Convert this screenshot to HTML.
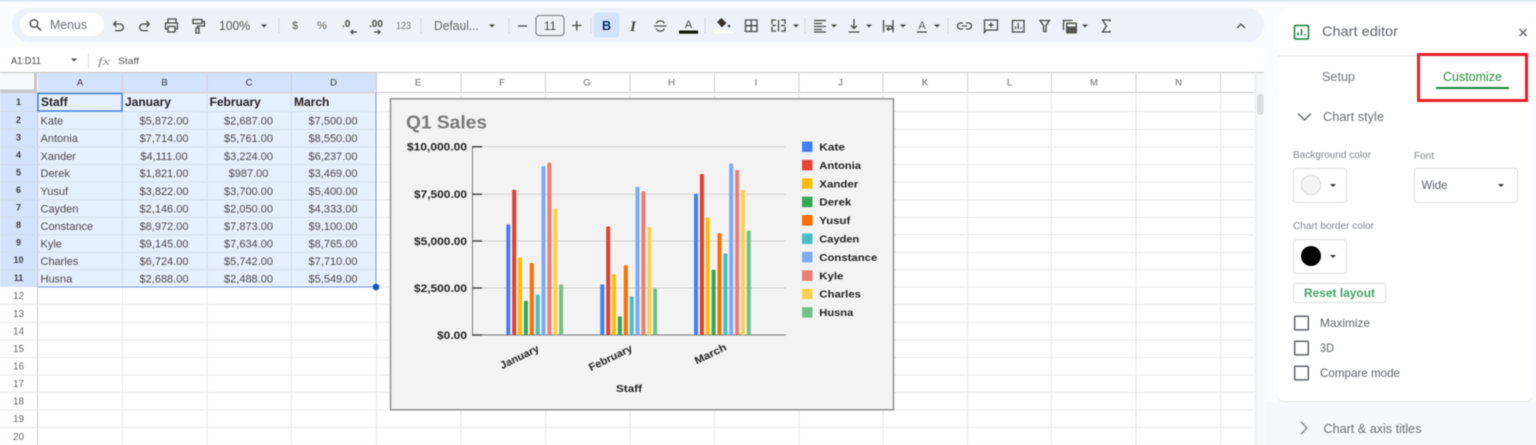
<!DOCTYPE html>
<html lang="en"><head><meta charset="utf-8"><title>Chart editor</title>
<style>
html,body{margin:0;padding:0;width:1536px;height:445px;overflow:hidden;background:#f9fbfd}
svg{display:block;filter:blur(.4px)}
text{font-family:"Liberation Sans",Arial,sans-serif}
.c{font-size:11px;fill:#4a4a4a;text-anchor:middle}
.n{font-size:11px;fill:#4a4a4a}
.h{font-size:12px;font-weight:700;fill:#222}
.rs{font-size:9px;font-weight:700;fill:#3c4043;text-anchor:middle}
.r{font-size:10px;fill:#6a6a6a;text-anchor:middle}
.cs{font-size:9.5px;fill:#333;text-anchor:middle}
.cu{font-size:9.5px;fill:#666;text-anchor:middle}
.y{font-size:11px;font-weight:700;fill:#222;text-anchor:end}
.l{font-size:10.5px;font-weight:700;fill:#222}
.i{fill:none;stroke:#444746;stroke-width:1.3}
.p{font-size:12px;fill:#5f6368}
.s{font-size:10px;fill:#80868b}
.t{fill:#5f6368}
</style></head><body>
<svg width="1536" height="445" viewBox="0 0 1536 445" xmlns="http://www.w3.org/2000/svg">
<rect width="1536" height="445" fill="#f9fbfd"/>
<rect width="1536" height="1.2" fill="#c9d6e6"/>
<!-- toolbar -->
<rect x="12" y="8" width="1252" height="34" rx="17" fill="#edf2fa"/>
<rect x="20" y="13" width="84" height="23" rx="11.5" fill="#fff"/>
<circle cx="34" cy="23.5" r="3.8" fill="none" stroke="#444746" stroke-width="1.4"/><path d="M37 26.5l4 4" stroke="#444746" stroke-width="1.5"/>
<text x="50" y="29" font-size="13" fill="#6a6e73" textLength="37" lengthAdjust="spacingAndGlyphs">Menus</text>
<path class="i" d="M114 24h6a3.2 3.2 0 0 1 0 6.6h-5M116.5 21l-2.8 3 2.8 3"/>
<path class="i" d="M149 24h-6a3.2 3.2 0 0 0 0 6.6h5M146.500 21l2.800 3-2.800 3"/>
<path class="i" d="M168 23v-4h8v4M168 29h-2.500v-6h12v6H175M168 26.500h7V32h-7z" stroke-width="1.4"/>
<path class="i" d="M193 19.500h9v4h-9zM202 21.500h2.500v4.500h-7v2M196 28h3v5h-3z" stroke-width="1.3"/>
<text x="219" y="30" font-size="13" fill="#555" textLength="31" lengthAdjust="spacingAndGlyphs">100%</text>
<path d="M261 24.500h6l-3 3z" fill="#444746"/>
<rect x="278.500" y="17" width="1" height="17" fill="#d3d7dd"/>
<text x="295" y="29" font-size="11" font-weight="700" fill="#777" text-anchor="middle">$</text>
<text x="322" y="29" font-size="11" font-weight="700" fill="#888" text-anchor="middle">%</text>
<text x="342" y="27" font-size="10" font-weight="700" fill="#444">.0</text>
<path class="i" d="M357 32h-6M353 30l-2 2 2 2" stroke-width="1"/>
<text x="369" y="27" font-size="10" font-weight="700" fill="#444">.00</text>
<path class="i" d="M374 32h6M378 30l2 2-2 2" stroke-width="1"/>
<text x="396" y="29" font-size="10" fill="#777" textLength="15" lengthAdjust="spacingAndGlyphs">123</text>
<rect x="420.500" y="17" width="1" height="17" fill="#d3d7dd"/>
<text x="434" y="30" font-size="12.500" fill="#666" textLength="45" lengthAdjust="spacingAndGlyphs">Defaul...</text>
<path d="M489 24.500h6l-3 3z" fill="#444746"/>
<rect x="508.500" y="17" width="1" height="17" fill="#d3d7dd"/>
<path d="M518 26h9" stroke="#444746" stroke-width="1.300"/>
<rect x="536" y="15.500" width="28" height="20" rx="3" fill="none" stroke="#70757a" stroke-width="1"/>
<text x="550" y="30" font-size="12" fill="#444" text-anchor="middle">11</text>
<path d="M572 25.500h9.500M576.700 21v9.500" stroke="#444746" stroke-width="1.300"/>
<rect x="590.500" y="17" width="1" height="17" fill="#d3d7dd"/>
<rect x="594" y="12.500" width="25" height="25" rx="3" fill="#d3e3fd"/>
<text x="606.500" y="30" font-size="12.500" font-weight="700" fill="#0b2a66" text-anchor="middle">B</text>
<text x="633" y="31" font-size="15" font-style="italic" font-weight="700" fill="#444746" text-anchor="middle" style='font-family:"Liberation Serif",serif'>I</text>
<path class="i" d="M654 26h12.500M656.500 23.500c0-3.500 7.500-3.500 7.500 0M656.500 28.500c0 3.500 7.500 3.500 7.500 0" stroke-width="1.100"/>
<text x="688.500" y="28" font-size="11" fill="#444" text-anchor="middle">A</text>
<rect x="679" y="30.500" width="19" height="3.200" fill="#111"/>
<rect x="704.500" y="17" width="1" height="17" fill="#d3d7dd"/>
<path d="M717 22l4.500-4 5 5-4.500 4.500z" fill="#333"/><circle cx="729" cy="26" r="1.300" fill="#333"/>
<rect x="713" y="30" width="20" height="3.300" fill="#fff"/>
<path class="i" d="M745.500 20h11.500v11.500h-11.500zM751.200 20v11.500M745.500 25.700H757"/>
<path class="i" d="M772 24v-4h4M785 24v-4h-4M772 27v4h4M785 27v4h-4M772 25.500h4M785 25.500h-4M778.500 20v11.500" stroke-width="1.200"/>
<path d="M793 24.500h6l-3 3z" fill="#444746"/>
<rect x="804.500" y="17" width="1" height="17" fill="#d3d7dd"/>
<path class="i" d="M814 20.500h12M814 23.500h8M814 26.500h12M814 29.500h8M814 32h12" stroke-width="1"/>
<path d="M831 24.500h6l-3 3z" fill="#444746"/>
<path class="i" d="M854 19v9M851 25.500l3 3 3-3M848.500 32h11"/>
<path d="M866 24.500h6l-3 3z" fill="#444746"/>
<path class="i" d="M883.500 20v12M893 20v12M885 26h6a1.500 1.500 0 0 1-1 3h-2M889 27.500l-2 1.500 2 1.500" stroke-width="1.100"/>
<path d="M900 24.500h6l-3 3z" fill="#444746"/>
<text x="922" y="29" font-size="11" fill="#555" text-anchor="middle">A</text><path class="i" d="M917 32h10" stroke-width="1"/>
<path d="M934 24.500h6l-3 3z" fill="#444746"/>
<rect x="947.500" y="17" width="1" height="17" fill="#d3d7dd"/>
<path class="i" d="M963 23h-2.500a3 3 0 0 0 0 6h2.500M966 23h2.500a3 3 0 0 1 0 6H966M962 26h5"/>
<path class="i" d="M984.500 20h13v10h-11l-2 2.500zM991 22.500v5M988.500 25h5"/>
<path class="i" d="M1012.500 20.500h11.500v11.500h-11.500zM1015.500 29v-2.500M1018.200 29v-6M1021 29v-1.500"/>
<path class="i" d="M1040 20.500h9.500l-3.500 5v6h-2.500v-6z"/>
<path class="i" d="M1063.500 30v-9.500h9"/><rect x="1066" y="22.500" width="11" height="11" rx="1" fill="#555"/><rect x="1067.500" y="24" width="8" height="2.500" fill="#edf2fa"/>
<path d="M1082 24.500h6l-3 3z" fill="#444746"/>
<path class="i" d="M1110 21.500v-1.500h-7.500l4 6-4 6h7.500v-1.500" stroke-width="1.400"/>
<path class="i" d="M1237 28l4-4 4 4" stroke-width="1.300"/>
<!-- formula bar -->
<rect x="0" y="48" width="1264" height="24" fill="#fff"/>
<text x="11" y="64" font-size="10.500" fill="#444" textLength="30" lengthAdjust="spacingAndGlyphs">A1:D11</text>
<path d="M71 58.500h6l-3 3z" fill="#444746"/>
<rect x="88" y="53" width="1" height="15" fill="#dadce0"/>
<text x="98" y="65" font-size="12" font-style="italic" fill="#8a8a8a" style='font-family:"Liberation Serif",serif' textLength="12" lengthAdjust="spacingAndGlyphs">fx</text>
<text x="118" y="64" font-size="9.500" fill="#555" textLength="21" lengthAdjust="spacingAndGlyphs">Staff</text>
<!-- grid -->
<rect x="0" y="72" width="1264" height="373" fill="#fff"/>
<rect x="38" y="73" width="338" height="19" fill="#d3e3fd"/>
<rect x="0" y="92" width="37" height="195" fill="#d3e3fd"/>
<rect x="38" y="92" width="338" height="195" fill="#e6effd"/>
<rect x="0" y="73" width="35" height="17" fill="#f8f9fa"/>
<path d="M35.500 73v18h-35.500" fill="none" stroke="#c7c7c7" stroke-width="3"/>
<path d="M0 72.500H1264" stroke="#c4c7c5" stroke-width="1"/>
<path d="M0 92.500H1255M37.500 92V445" stroke="#c9c9c9" stroke-width="1"/>
<path d="M0 111.500H376M0 129.300H376M0 147H376M0 164.500H376M0 182H376M0 199.700H376M0 217.300H376M0 234.800H376M0 252.300H376M0 269.800H376" stroke="#d2dcec" stroke-width="1"/>
<path d="M122.500 92V287M207 92V287M291.500 92V287" stroke="#d2dcec" stroke-width="1"/>
<path d="M376 111.500H1255M376 129.300H1255M376 147H1255M376 164.500H1255M376 182H1255M376 199.700H1255M376 217.300H1255M376 234.800H1255M376 252.300H1255M376 269.800H1255M376 287H1255M0 304.500H1255M0 322.300H1255M0 340H1255M0 357.500H1255M0 375H1255M0 392.500H1255M0 410H1255M0 427.700H1255" stroke="#e8e8e8" stroke-width="1"/>
<path d="M122.500 287V445M207 287V445M291.500 287V445M376.500 287V445M461 92V445M545.500 92V445M630 92V445M714.500 92V445M799 92V445M883 92V445M967.500 92V445M1051.500 92V445M1136 92V445M1220.500 92V445M1255.500 72V445" stroke="#e8e8e8" stroke-width="1"/>
<path d="M122.500 73V92M207 73V92M291.500 73V92M376.500 73V92M461 73V92M545.500 73V92M630 73V92M714.500 73V92M799 73V92M883 73V92M967.500 73V92M1051.500 73V92M1136 73V92M1220.500 73V92" stroke="#cfcfcf" stroke-width="1"/>
<rect x="1256" y="73" width="8" height="372" fill="#f8f9fa"/>
<rect x="1257" y="94" width="6.500" height="21" rx="3" fill="#dadce0"/>
<text class="cs" x="80" y="85.500">A</text><text class="cs" x="164.500" y="85.500">B</text><text class="cs" x="249" y="85.500">C</text><text class="cs" x="333.500" y="85.500">D</text>
<text class="cu" x="418" y="85.500">E</text><text class="cu" x="502" y="85.500">F</text><text class="cu" x="587" y="85.500">G</text><text class="cu" x="671.500" y="85.500">H</text><text class="cu" x="756" y="85.500">I</text><text class="cu" x="840.500" y="85.500">J</text><text class="cu" x="925" y="85.500">K</text><text class="cu" x="1009.500" y="85.500">L</text><text class="cu" x="1094" y="85.500">M</text><text class="cu" x="1178.500" y="85.500">N</text>
<text class="rs" x="18.500" y="105">1</text><text class="rs" x="18.500" y="123">2</text><text class="rs" x="18.500" y="140.500">3</text><text class="rs" x="18.500" y="158">4</text><text class="rs" x="18.500" y="175.500">5</text><text class="rs" x="18.500" y="193">6</text><text class="rs" x="18.500" y="210.500">7</text><text class="rs" x="18.500" y="228">8</text><text class="rs" x="18.500" y="245.500">9</text><text class="rs" x="18.500" y="263">10</text><text class="rs" x="18.500" y="281">11</text>
<text class="r" x="18.500" y="299">12</text><text class="r" x="18.500" y="317">13</text><text class="r" x="18.500" y="334.500">14</text><text class="r" x="18.500" y="352">15</text><text class="r" x="18.500" y="369.500">16</text><text class="r" x="18.500" y="387">17</text><text class="r" x="18.500" y="404.500">18</text><text class="r" x="18.500" y="422">19</text><text class="r" x="18.500" y="440">20</text>
<text class="h" x="41" y="106">Staff</text><text class="h" x="125" y="106">January</text><text class="h" x="209.500" y="106">February</text><text class="h" x="294" y="106">March</text>
<text class="n" x="40.500" y="124.500">Kate</text><text class="c" x="164" y="124.500">$5,872.00</text><text class="c" x="248.500" y="124.500">$2,687.00</text><text class="c" x="333" y="124.500">$7,500.00</text>
<text class="n" x="40.500" y="142">Antonia</text><text class="c" x="164" y="142">$7,714.00</text><text class="c" x="248.500" y="142">$5,761.00</text><text class="c" x="333" y="142">$8,550.00</text>
<text class="n" x="40.500" y="160">Xander</text><text class="c" x="164" y="160">$4,111.00</text><text class="c" x="248.500" y="160">$3,224.00</text><text class="c" x="333" y="160">$6,237.00</text>
<text class="n" x="40.500" y="177">Derek</text><text class="c" x="164" y="177">$1,821.00</text><text class="c" x="248.500" y="177">$987.00</text><text class="c" x="333" y="177">$3,469.00</text>
<text class="n" x="40.500" y="195">Yusuf</text><text class="c" x="164" y="195">$3,822.00</text><text class="c" x="248.500" y="195">$3,700.00</text><text class="c" x="333" y="195">$5,400.00</text>
<text class="n" x="40.500" y="212.500">Cayden</text><text class="c" x="164" y="212.500">$2,146.00</text><text class="c" x="248.500" y="212.500">$2,050.00</text><text class="c" x="333" y="212.500">$4,333.00</text>
<text class="n" x="40.500" y="230">Constance</text><text class="c" x="164" y="230">$8,972.00</text><text class="c" x="248.500" y="230">$7,873.00</text><text class="c" x="333" y="230">$9,100.00</text>
<text class="n" x="40.500" y="247.500">Kyle</text><text class="c" x="164" y="247.500">$9,145.00</text><text class="c" x="248.500" y="247.500">$7,634.00</text><text class="c" x="333" y="247.500">$8,765.00</text>
<text class="n" x="40.500" y="265">Charles</text><text class="c" x="164" y="265">$6,724.00</text><text class="c" x="248.500" y="265">$5,742.00</text><text class="c" x="333" y="265">$7,710.00</text>
<text class="n" x="40.500" y="282.500">Husna</text><text class="c" x="164" y="282.500">$2,688.00</text><text class="c" x="248.500" y="282.500">$2,488.00</text><text class="c" x="333" y="282.500">$5,549.00</text>
<!-- selection -->
<path d="M38 287H376V92.500" fill="none" stroke="#6f9ae8" stroke-width="1"/>
<rect x="38" y="93.500" width="84" height="17.500" fill="none" stroke="#2f76e0" stroke-width="1.300"/>
<circle cx="376" cy="287" r="3.300" fill="#0b57d0"/>
<!-- chart -->
<rect x="390.500" y="98.800" width="503" height="311" fill="#f3f3f3" stroke="#8f8f8f" stroke-width="1.500"/>
<text x="406" y="128.500" font-size="18" font-weight="700" fill="#7a7a7a" textLength="81" lengthAdjust="spacingAndGlyphs">Q1 Sales</text>
<path d="M472 146.700H786M472 194.300H786M472 241H786M472 288H786" stroke="#cfcfcf" stroke-width="1"/>
<path d="M472.500 146.700V335M472 335H786" stroke="#777" stroke-width="1"/>
<path d="M472 146.700h10M472 194.300h10M472 241h10M472 288h10M472 335h10" stroke="#444" stroke-width="1.500"/>
<text class="y" x="467" y="150.500" textLength="60" lengthAdjust="spacingAndGlyphs">$10,000.00</text>
<text class="y" x="467" y="198" textLength="53" lengthAdjust="spacingAndGlyphs">$7,500.00</text>
<text class="y" x="467" y="245" textLength="53" lengthAdjust="spacingAndGlyphs">$5,000.00</text>
<text class="y" x="467" y="292" textLength="53" lengthAdjust="spacingAndGlyphs">$2,500.00</text>
<text class="y" x="467" y="339" textLength="30" lengthAdjust="spacingAndGlyphs">$0.00</text>
<g>
<g fill="#3f80f5"><rect x="506.300" y="224.400" width="4" height="110.600" rx="1"/><rect x="600.300" y="284.400" width="4" height="50.600" rx="1"/><rect x="694" y="193.800" width="4" height="141.200" rx="1"/></g>
<g fill="#e63c2e"><rect x="512.200" y="189.700" width="4" height="145.300" rx="1"/><rect x="606.200" y="226.500" width="4" height="108.500" rx="1"/><rect x="699.900" y="174" width="4" height="161" rx="1"/></g>
<g fill="#fbbc04"><rect x="518" y="257.600" width="4" height="77.400" rx="1"/><rect x="612" y="274.300" width="4" height="60.700" rx="1"/><rect x="705.700" y="217.600" width="4" height="117.400" rx="1"/></g>
<g fill="#34a853"><rect x="523.900" y="300.700" width="4" height="34.300" rx="1"/><rect x="617.900" y="316.400" width="4" height="18.600" rx="1"/><rect x="711.600" y="269.700" width="4" height="65.300" rx="1"/></g>
<g fill="#ff6d01"><rect x="529.800" y="263" width="4" height="72" rx="1"/><rect x="623.800" y="265.300" width="4" height="69.700" rx="1"/><rect x="717.500" y="233.300" width="4" height="101.700" rx="1"/></g>
<g fill="#46bdc6"><rect x="535.700" y="294.600" width="4" height="40.400" rx="1"/><rect x="629.700" y="296.400" width="4" height="38.600" rx="1"/><rect x="723.400" y="253.400" width="4" height="81.600" rx="1"/></g>
<g fill="#7baaf7"><rect x="541.500" y="166.100" width="4" height="168.900" rx="1"/><rect x="635.500" y="186.800" width="4" height="148.200" rx="1"/><rect x="729.200" y="163.600" width="4" height="171.400" rx="1"/></g>
<g fill="#f07b72"><rect x="547.400" y="162.800" width="4" height="172.200" rx="1"/><rect x="641.400" y="191.300" width="4" height="143.700" rx="1"/><rect x="735.100" y="170" width="4" height="165" rx="1"/></g>
<g fill="#fcd04f"><rect x="553.300" y="208.400" width="4" height="126.600" rx="1"/><rect x="647.300" y="226.900" width="4" height="108.100" rx="1"/><rect x="741" y="189.800" width="4" height="145.200" rx="1"/></g>
<g fill="#71c287"><rect x="559.100" y="284.400" width="4" height="50.600" rx="1"/><rect x="653.100" y="288.200" width="4" height="46.800" rx="1"/><rect x="746.800" y="230.500" width="4" height="104.500" rx="1"/></g>
</g>
<text transform="translate(521 360) rotate(-26)" font-size="10.500" font-weight="700" fill="#222" text-anchor="middle" textLength="42" lengthAdjust="spacingAndGlyphs">January</text>
<text transform="translate(612 361) rotate(-26)" font-size="10.500" font-weight="700" fill="#222" text-anchor="middle" textLength="47" lengthAdjust="spacingAndGlyphs">February</text>
<text transform="translate(712 357) rotate(-26)" font-size="10.500" font-weight="700" fill="#222" text-anchor="middle" textLength="34" lengthAdjust="spacingAndGlyphs">March</text>
<text x="629" y="392" font-size="10.500" font-weight="700" fill="#222" text-anchor="middle" textLength="26" lengthAdjust="spacingAndGlyphs">Staff</text>
<rect x="802" y="141.500" width="10.500" height="10.500" fill="#3f80f5"/><text class="l" x="819.300" y="150.500" textLength="25.700" lengthAdjust="spacingAndGlyphs">Kate</text>
<rect x="802" y="159.900" width="10.500" height="10.500" fill="#ea4335"/><text class="l" x="819.300" y="169" textLength="41.700" lengthAdjust="spacingAndGlyphs">Antonia</text>
<rect x="802" y="178.300" width="10.500" height="10.500" fill="#fbbc04"/><text class="l" x="819.300" y="187.300" textLength="39" lengthAdjust="spacingAndGlyphs">Xander</text>
<rect x="802" y="196.700" width="10.500" height="10.500" fill="#34a853"/><text class="l" x="819.300" y="205.700" textLength="32" lengthAdjust="spacingAndGlyphs">Derek</text>
<rect x="802" y="215.100" width="10.500" height="10.500" fill="#ff6d01"/><text class="l" x="819.300" y="224" textLength="31" lengthAdjust="spacingAndGlyphs">Yusuf</text>
<rect x="802" y="233.500" width="10.500" height="10.500" fill="#46bdc6"/><text class="l" x="819.300" y="242.500" textLength="40" lengthAdjust="spacingAndGlyphs">Cayden</text>
<rect x="802" y="251.900" width="10.500" height="10.500" fill="#7baaf7"/><text class="l" x="819.300" y="261" textLength="58" lengthAdjust="spacingAndGlyphs">Constance</text>
<rect x="802" y="270.300" width="10.500" height="10.500" fill="#f07b72"/><text class="l" x="819.300" y="279.300" textLength="24" lengthAdjust="spacingAndGlyphs">Kyle</text>
<rect x="802" y="288.700" width="10.500" height="10.500" fill="#fcd04f"/><text class="l" x="819.300" y="297.700" textLength="41.700" lengthAdjust="spacingAndGlyphs">Charles</text>
<rect x="802" y="307.100" width="10.500" height="10.500" fill="#71c287"/><text class="l" x="819.300" y="316" textLength="34" lengthAdjust="spacingAndGlyphs">Husna</text>
<!-- side panel -->
<rect x="1265" y="402" width="271" height="43" fill="#f6f8fb"/>
<path d="M1278 20a12 12 0 0 1 12-12h246V92H1278z" fill="#fff"/>
<rect x="1278" y="55" width="258" height="1.500" fill="#eceef1"/>
<rect x="1278" y="92" width="254" height="310" rx="5" fill="#e4e6ea"/>
<rect x="1278" y="92" width="254" height="309" rx="5" fill="#fff"/>
<rect x="1294.500" y="25.500" width="14" height="13.500" rx="1" fill="none" stroke="#188038" stroke-width="1.500"/>
<path d="M1298 35.500v-3M1301.500 35.500v-6.500M1305 35.500v-1.500" stroke="#188038" stroke-width="1.500"/>
<text x="1322" y="36" font-size="14" fill="#5f6368" textLength="76" lengthAdjust="spacingAndGlyphs">Chart editor</text>
<path d="M1519.500 29l7 7M1526.500 29l-7 7" stroke="#5f6368" stroke-width="1.400"/>
<text x="1322" y="81" font-size="12.500" fill="#6f7378" textLength="33" lengthAdjust="spacingAndGlyphs">Setup</text>
<text x="1443" y="81" font-size="12.500" fill="#1e8e3e" textLength="59" lengthAdjust="spacingAndGlyphs">Customize</text>
<rect x="1436" y="87" width="73" height="2" fill="#188038"/>
<rect x="1418.500" y="54.500" width="108" height="46" fill="none" stroke="#ed1c24" stroke-width="3"/>
<path d="M1298 113.500l6.500 6.500 6.500-6.500" fill="none" stroke="#5f6368" stroke-width="1.400"/>
<text x="1323" y="121" font-size="12.500" fill="#6a6e73" textLength="61" lengthAdjust="spacingAndGlyphs">Chart style</text>
<text class="s" x="1293" y="158" textLength="78" lengthAdjust="spacingAndGlyphs">Background color</text>
<text class="s" x="1414" y="159" textLength="20" lengthAdjust="spacingAndGlyphs">Font</text>
<rect x="1293.500" y="168.500" width="53" height="34" rx="3" fill="#fff" stroke="#dadce0"/>
<circle cx="1311" cy="185" r="9.700" fill="#f3f3f3" stroke="#dcdcdc"/>
<path d="M1330 184h6l-3 3z" fill="#333"/>
<rect x="1414.500" y="168.500" width="103" height="34" rx="3" fill="#fff" stroke="#dadce0"/>
<text x="1421.500" y="189" font-size="12" fill="#5f6368" textLength="26" lengthAdjust="spacingAndGlyphs">Wide</text>
<path d="M1498 184h6l-3 3z" fill="#333"/>
<text class="s" x="1293" y="229" textLength="81" lengthAdjust="spacingAndGlyphs">Chart border color</text>
<rect x="1293.500" y="239.500" width="53" height="34" rx="3" fill="#fff" stroke="#dadce0"/>
<circle cx="1311" cy="256" r="10" fill="#000"/>
<path d="M1330 255h6l-3 3z" fill="#333"/>
<rect x="1293.500" y="283.500" width="92" height="19" rx="2" fill="#fff" stroke="#dadce0"/>
<text x="1304" y="297" font-size="11.500" font-weight="700" fill="#3fa563" textLength="71" lengthAdjust="spacingAndGlyphs">Reset layout</text>
<rect x="1294.700" y="316.300" width="13.600" height="13.600" rx="1" fill="#fff" stroke="#5f6368" stroke-width="1.500"/>
<text class="p" x="1320" y="327" textLength="50" lengthAdjust="spacingAndGlyphs">Maximize</text>
<rect x="1294.700" y="341.300" width="13.600" height="13.600" rx="1" fill="#fff" stroke="#5f6368" stroke-width="1.500"/>
<text class="p" x="1320" y="352" textLength="14" lengthAdjust="spacingAndGlyphs">3D</text>
<rect x="1294.700" y="366.300" width="13.600" height="13.600" rx="1" fill="#fff" stroke="#5f6368" stroke-width="1.500"/>
<text class="p" x="1320" y="377" textLength="80" lengthAdjust="spacingAndGlyphs">Compare mode</text>
<path d="M1301 422l6 6-6 6" fill="none" stroke="#80868b" stroke-width="1.400"/>
<text x="1323.500" y="433" font-size="12.500" fill="#6a6e73" textLength="98" lengthAdjust="spacingAndGlyphs">Chart &amp; axis titles</text>
</svg>
</body></html>
